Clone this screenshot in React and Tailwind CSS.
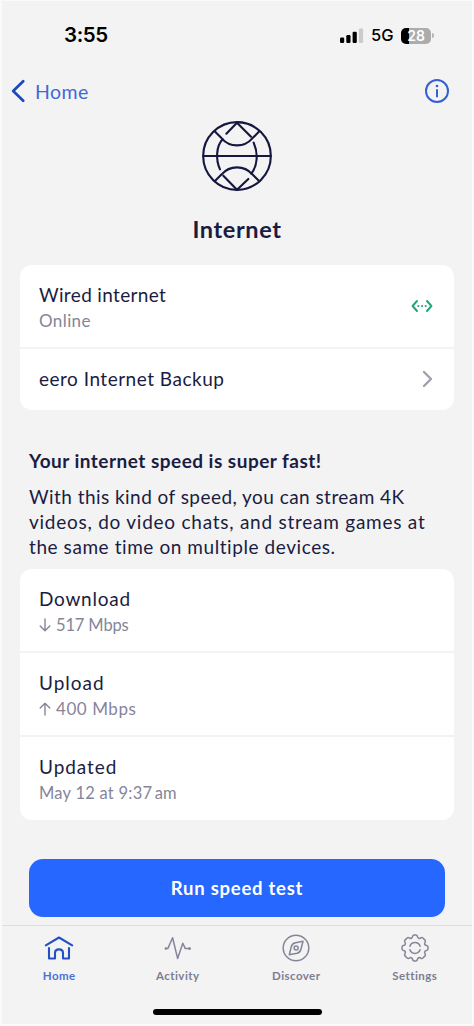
import React from "react";

const GlobeIcon = () => (
  <svg width="72" height="72" viewBox="0 0 216 216" fill="none" stroke="#15173f" strokeWidth="6.4" strokeLinecap="round">
    <circle cx="108" cy="108" r="101.5" />
    <path d="M7 108H209" />
    <path d="M41 34L62 55C86 83 130 83 154 55L175 34" />
    <path d="M76 41L108 8L150 50" />
    <path d="M41 184L62 163C86 135 130 135 154 163L175 184" />
    <path d="M67 167L108 209L142 177" />
    <path d="M65 58C46 78 43 118 57 148" />
    <path d="M158 68C172 100 170 136 151 161" />
  </svg>
);

const HomeIcon = () => (
  <svg width="30" height="30" viewBox="0 0 30 30" fill="none" stroke="#2450c4" strokeWidth="2.1" strokeLinecap="round" strokeLinejoin="round">
    <path d="M1.8 12.3L15 4.5L28.2 12.3" />
    <path d="M5 15V25.5H11V20C11 15.2 19 15.2 19 20V25.5H25V15" />
  </svg>
);

const ActivityIcon = () => (
  <svg width="30" height="30" viewBox="0 0 30 30" fill="none" stroke="#85859a" strokeWidth="1.5" strokeLinecap="round" strokeLinejoin="round">
    <path d="M2.6 15.6H4.8L9.6 4.8L14.6 25.4L19.8 10.2L22.3 15.6H26.5" />
    <circle cx="2.8" cy="15.6" r="0.5" />
    <circle cx="26.6" cy="15.6" r="0.7" fill="#85859a" />
  </svg>
);

const DiscoverIcon = () => (
  <svg width="30" height="30" viewBox="0 0 30 30" fill="none" stroke="#85859a" strokeWidth="1.5" strokeLinejoin="round">
    <circle cx="15" cy="15" r="12.8" />
    <path d="M22 8.2L14.5 9.7Q11 10.4 10.2 14L8.3 21.8L16 20.2Q19.3 19.4 20 16Z" />
    <circle cx="15.1" cy="15" r="2" />
  </svg>
);

const SettingsIcon = () => (
  <svg width="30" height="30" viewBox="0 0 30 30" fill="none" stroke="#85859a" strokeWidth="1.5" strokeLinecap="round" strokeLinejoin="round">
    {[0, 90, 180, 270].map((angle) => (
      <path
        key={angle}
        transform={`rotate(${angle} 15 15)`}
        d="M11.2 5.3Q12.4 4.9 12.6 3.5Q12.9 2 14.2 2H15.8Q17.1 2 17.4 3.5Q17.6 4.9 18.8 5.3Q19.7 5.7 20.8 4.9Q22 4.1 22.9 5L25 7.1Q25.9 8 25.1 9.2Q24.3 10.3 24.7 11.2"
      />
    ))}
    <path d="M9.9 13.2A5.4 5.4 0 0 1 20.1 13.2" />
    <path d="M9.9 16.8A5.4 5.4 0 0 0 20.1 16.8" />
  </svg>
);

const EthernetIcon = () => (
  <svg width="22" height="14" viewBox="0 0 22 14" fill="none" stroke="#23a67c" strokeWidth="2" strokeLinecap="round" strokeLinejoin="round">
    <path d="M6 2L1.6 7L6 12M16 2L20.4 7L16 12" />
    <path d="M7.3 7H7.4M11 7H11.1M14.6 7H14.7" />
  </svg>
);

const speedRows = [
  { title: "Download", arrow: "down", value: "517 Mbps", titleClass: "tracking-[0.75px]", valueClass: "text-[16.5px] tracking-[-0.15px]" },
  { title: "Upload", arrow: "up", value: "400 Mbps", titleClass: "tracking-[1px]", valueClass: "text-[17px] tracking-[0.55px]" },
  { title: "Updated", value: "May 12 at 9:37\u2009am", titleClass: "tracking-[0.95px]", valueClass: "text-[16.5px] tracking-[0.25px]" },
];

const tabs = [
  { label: "Home", Icon: HomeIcon, className: "text-[#4a72d6]" },
  { label: "Activity", Icon: ActivityIcon, className: "text-[#7d7d92]" },
  { label: "Discover", Icon: DiscoverIcon, className: "text-[#7d7d92]" },
  { label: "Settings", Icon: SettingsIcon, className: "text-[#7d7d92]" },
];

const StatusBar = () => (
  <div className="flex h-[69px] shrink-0 items-center pl-[62px] pr-[38px] font-['Inter',sans-serif] text-black">
    <span className="text-[20.5px] font-semibold leading-none tracking-[-0.4px]">3:55</span>
    <div className="ml-auto flex items-center">
      <svg width="24" height="16" viewBox="0 0 24 16">
        <rect x="0" y="9.5" width="4.2" height="5.5" rx="1.2" />
        <rect x="6.3" y="7" width="4.2" height="8" rx="1.2" />
        <rect x="12.6" y="3.7" width="4.2" height="11.3" rx="1.2" />
        <rect x="18.9" y="0.5" width="4.2" height="14.5" rx="1.2" fill="#cbcbcb" />
      </svg>
      <span className="ml-[7px] w-[24px] text-[16.5px] font-medium leading-none">5G</span>
      <div className="ml-[6px] flex h-[16px] w-[30px] items-center justify-center rounded-[5px] bg-linear-to-r from-black from-28% to-[#acacac] to-28%">
        <span className="text-[14px] font-semibold leading-none text-white">28</span>
      </div>
      <div className="ml-px h-[5px] w-[2px] rounded-r-full bg-[#b5b5b5]" />
    </div>
  </div>
);

const App = () => {
  return (
    <div className="flex h-[1026px] w-full flex-col overflow-hidden border-2 border-t border-[#fafafa] bg-[#f3f3f3] font-['Lato',sans-serif] text-[#1b1c42]">
      <StatusBar />

      <div className="flex h-[42px] shrink-0 items-center justify-between pl-[9px] pr-[22px]">
        <div className="flex items-center text-[#3f6ad5]">
          <svg width="14" height="24" viewBox="0 0 14 24" fill="none" stroke="#1b49bd" strokeWidth="2.7" strokeLinecap="round" strokeLinejoin="round">
            <path d="M12.2 2.2L2.2 12L12.2 21.8" />
          </svg>
          <span className="ml-[10px] pt-[2px] text-[19.5px] leading-6 tracking-[0.4px]">Home</span>
        </div>
        <svg width="26" height="26" viewBox="0 0 26 26" fill="none" stroke="#3560d2" strokeWidth="2">
          <circle cx="13" cy="13" r="11" />
          <path d="M13 11.3V19.3" />
          <circle cx="13" cy="8" r="1.3" fill="#3560d2" stroke="none" />
        </svg>
      </div>

      <div className="flex h-[153px] shrink-0 flex-col items-center pt-[8px]">
        <GlobeIcon />
        <h1 className="mt-[22px] text-[23.5px] font-bold leading-[30px] tracking-[0.6px]">Internet</h1>
      </div>

      <div className="mx-[18px] h-[145px] shrink-0 divide-y-2 divide-[#f3f3f3] rounded-[12px] bg-white">
        <div className="flex h-[84px] items-center justify-between pl-[19px] pr-[21px]">
          <div className="pt-[4px]">
            <p className="text-[19px] leading-[26px] tracking-[0.35px]">Wired internet</p>
            <p className="text-[17px] leading-[26px] tracking-[0.4px] text-[#85859a]">Online</p>
          </div>
          <EthernetIcon />
        </div>
        <div className="flex h-[60px] items-center justify-between pl-[19px] pr-[21px]">
          <p className="text-[19px] leading-[26px] tracking-[0.5px]">eero Internet Backup</p>
          <svg width="11" height="18" viewBox="0 0 11 18" fill="none" stroke="#a09fb0" strokeWidth="2.4" strokeLinecap="round" strokeLinejoin="round">
            <path d="M2 2L9 9L2 16" />
          </svg>
        </div>
      </div>

      <div className="h-[159px] shrink-0 px-[27px] pt-[38px]">
        <h2 className="text-[19px] font-bold leading-[26px] tracking-[0.48px]">
          Your internet speed is super fast!
        </h2>
        <p className="mt-[10px] whitespace-nowrap text-[19px] leading-[25px]">
          <span className="block tracking-[0.45px]">With this kind of speed, you can stream 4K</span>
          <span className="block tracking-[0.75px]">videos, do video chats, and stream games at</span>
          <span className="block tracking-[0.57px]">the same time on multiple devices.</span>
        </p>
      </div>

      <div className="mx-[18px] h-[251px] shrink-0 divide-y-2 divide-[#f3f3f3] rounded-[12px] bg-white">
        {speedRows.map((row) => (
          <div key={row.title} className="flex h-[84px] flex-col justify-center pl-[19px] pt-[3px] last:h-[82px]">
            <p className={`text-[19px] leading-[26px] ${row.titleClass}`}>{row.title}</p>
            <div className="flex items-center text-[#85859a]">
              {row.arrow && (
                <svg className="mr-[5px]" width="12" height="14" viewBox="0 0 12 14" fill="none" stroke="currentColor" strokeWidth="1.4" strokeLinecap="round" strokeLinejoin="round">
                  {row.arrow === "down" ? (
                    <path d="M6 1V12.6M1.2 8L6 12.8L10.8 8" />
                  ) : (
                    <path d="M6 13V1.4M1.2 6L6 1.2L10.8 6" />
                  )}
                </svg>
              )}
              <span className={`leading-[26px] ${row.valueClass}`}>{row.value}</span>
            </div>
          </div>
        ))}
      </div>

      <button className="mx-[27px] mt-[39px] h-[58px] shrink-0 rounded-[14px] bg-[#2567ff] pt-[2px] text-[18.5px] font-bold tracking-[0.75px] text-white">
        Run speed test
      </button>

      <nav className="-mx-[2px] mt-[8px] grid h-[74px] shrink-0 grid-cols-4 border-t border-[#dcdee2] pt-[7px]">
        {tabs.map(({ label, Icon, className }) => (
          <div key={label} className={`flex flex-col items-center ${className}`}>
            <Icon />
            <span className="mt-[5px] text-[11.5px] font-bold leading-4 tracking-[0.45px]">{label}</span>
          </div>
        ))}
      </nav>
      <div className="mx-auto mt-[10px] h-[6px] w-[169px] shrink-0 rounded-full bg-black" />
    </div>
  );
};

export default App;
